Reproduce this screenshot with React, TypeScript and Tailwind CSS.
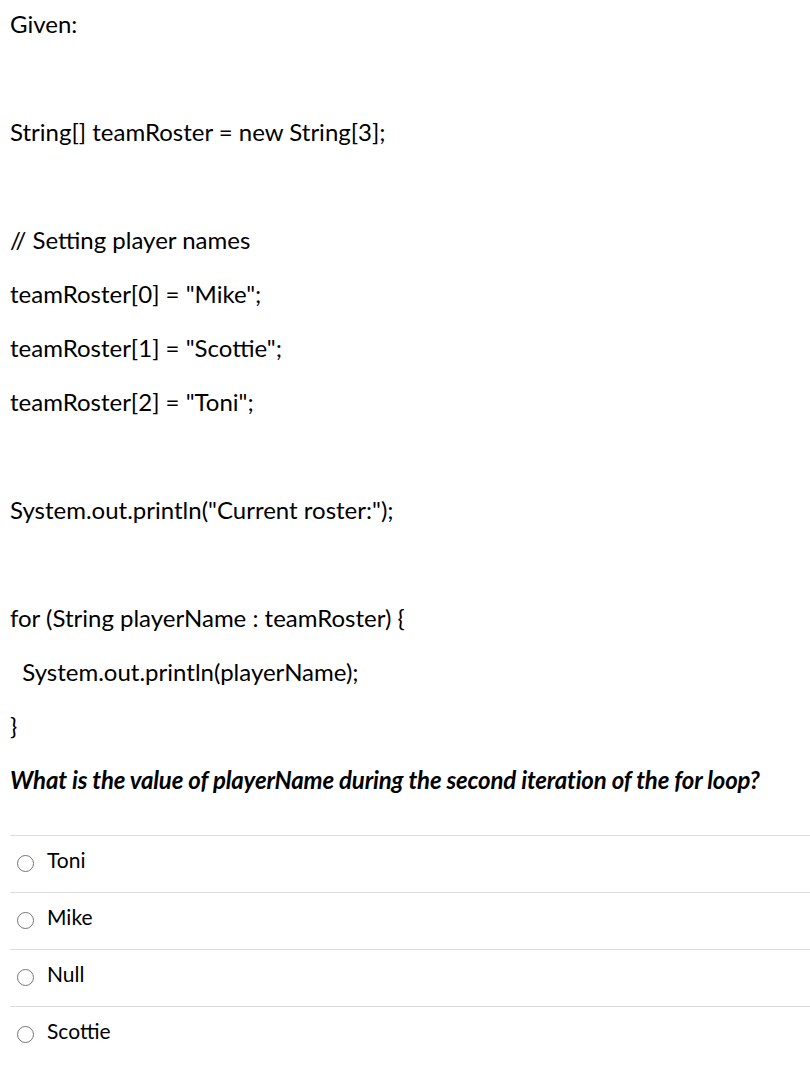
const lines: string[] = [
  "Given:",
  "",
  "String[] teamRoster = new String[3];",
  "",
  "// Setting player names",
  'teamRoster[0] = "Mike";',
  'teamRoster[1] = "Scottie";',
  'teamRoster[2] = "Toni";',
  "",
  'System.out.println("Current roster:");',
  "",
  "for (String playerName : teamRoster) {",
  "\u00a0\u00a0System.out.println(playerName);",
  "}",
];

const answers = ["Toni", "Mike", "Null", "Scottie"];

const App = () => {
  return (
    <div className="w-[810px] min-h-[1066px] bg-white text-black pl-[10px] font-['Lato',sans-serif]">
      <div className="-mt-[3px] text-[24px]">
        {lines.map((l, i) => (
          <div key={i} className="h-[54px] leading-[54px] whitespace-pre">
            {l}
          </div>
        ))}
      </div>
      <div className="h-[54px] leading-[54px] text-[24px] font-bold italic tracking-[-0.16px]">
        What is the value of playerName during the second iteration of the for loop?
      </div>
      <div className="mt-[28px]">
        {answers.map((a) => (
          <div key={a} className="h-[57px] border-t border-[#dcdcdc] flex items-start">
            <span className="mt-[19px] ml-[7px] w-[17px] h-[17px] rounded-full border border-[#767676] bg-white" />
            <span className="mt-[13px] ml-[13px] text-[21px] leading-none">{a}</span>
          </div>
        ))}
      </div>
    </div>
  );
};

export default App;
